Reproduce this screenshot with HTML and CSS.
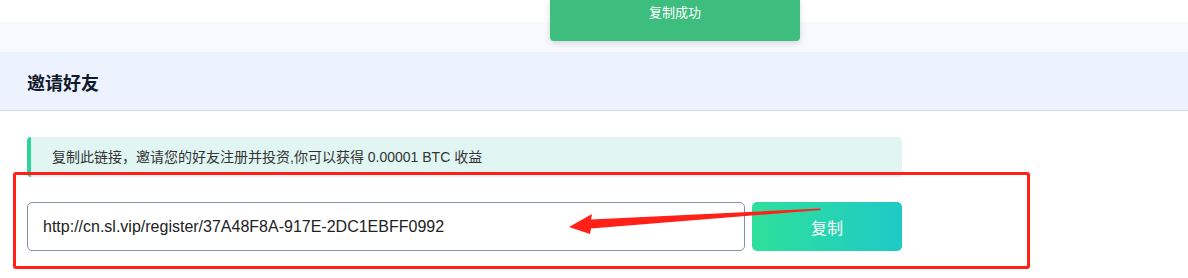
FILE: index.html
```html
<!DOCTYPE html>
<html lang="zh-CN">
<head>
    <meta charset="UTF-8">
    <meta name="viewport" content="width=device-width, initial-scale=1.0">
    <title>邀请好友</title>
    <link rel="stylesheet" href="styles.css">
</head>
<body>
    <div class="top-gap"></div>
    <div class="strip"></div>
    <div class="section-head">
        <h2>邀请好友</h2>
    </div>

    <div class="content">
        <div class="notice">复制此链接，邀请您的好友注册并投资,你可以获得 0.00001 BTC 收益</div>
        <div class="copy-row">
            <input class="link-input" type="text" value="http://cn.sl.vip/register/37A48F8A-917E-2DC1EBFF0992" readonly>
            <button class="copy-btn">复制</button>
        </div>
    </div>

    <!-- toast shown after copy -->
    <div class="toast">复制成功</div>

    <!-- red annotation drawn over the screenshot -->
    <div class="mark"></div>
    <svg class="arrow" width="260" height="40" viewBox="0 0 260 40">
        <path d="M255 6 L254 4.5 L25 15.5 L26 10 L3 23 L24 30 L25 24.5 Z" fill="#ff2117"/>
    </svg>
</body>
</html>
```

FILE: styles.css
```css
* {
    margin: 0;
    padding: 0;
    box-sizing: border-box;
}
body {
    position: relative;
    background: #fff;
    font-family: "Liberation Sans", "Noto Sans CJK SC", sans-serif;
    color: #333;
    width: 1188px;
    height: 278px;
    overflow: hidden;
}
.top-gap {
    height: 22px;
}
.strip {
    height: 30px;
    background-color: #f7f9fe;
}
.section-head {
    height: 59px;
    background-color: #edf3fe;
    border-bottom: 1px solid #d7d9f4;
    display: flex;
    align-items: center;
    padding-left: 27px;
}
.section-head h2 {
    font-family: "Noto Sans CJK SC", sans-serif;
    font-size: 18px;
    font-weight: bold;
    color: #111a2c;
    margin-top: 1px;
}
.content {
    padding: 26px 27px 0;
}
.notice {
    width: 875px;
    height: 40px;
    line-height: 40px;
    background-color: #e1f6f2;
    border-left: 4px solid #2fd597;
    border-radius: 4px;
    padding-left: 21px;
    font-size: 14px;
    color: #333;
}
.copy-row {
    display: flex;
    gap: 7px;
    margin-top: 25px;
}
.link-input {
    width: 718px;
    height: 49px;
    border: 1px solid #8591a8;
    border-radius: 5px;
    padding-left: 15px;
    font-family: "Liberation Sans", sans-serif;
    font-size: 16px;
    color: #222;
    outline: none;
}
.copy-btn {
    width: 150px;
    height: 49px;
    border: none;
    border-radius: 5px;
    background: linear-gradient(90deg, #2ee09a, #1fc9c7);
    color: #fff;
    font-family: "Noto Sans CJK SC", sans-serif;
    font-size: 16px;
    cursor: pointer;
}
.toast {
    position: absolute;
    left: 550px;
    top: 0;
    width: 250px;
    height: 41px;
    background-color: #3dbd7e;
    border-radius: 0 0 4px 4px;
    box-shadow: 0 2px 6px rgba(0, 0, 0, 0.15);
    color: #fff;
    text-align: center;
    font-family: "Noto Sans CJK SC", sans-serif;
    font-size: 13px;
    line-height: 24px;
}
.mark {
    position: absolute;
    left: 13px;
    top: 172px;
    width: 1017px;
    height: 97px;
    border: 3px solid #ff2117;
    border-radius: 3px;
}
.arrow {
    position: absolute;
    left: 566px;
    top: 204px;
}
```
